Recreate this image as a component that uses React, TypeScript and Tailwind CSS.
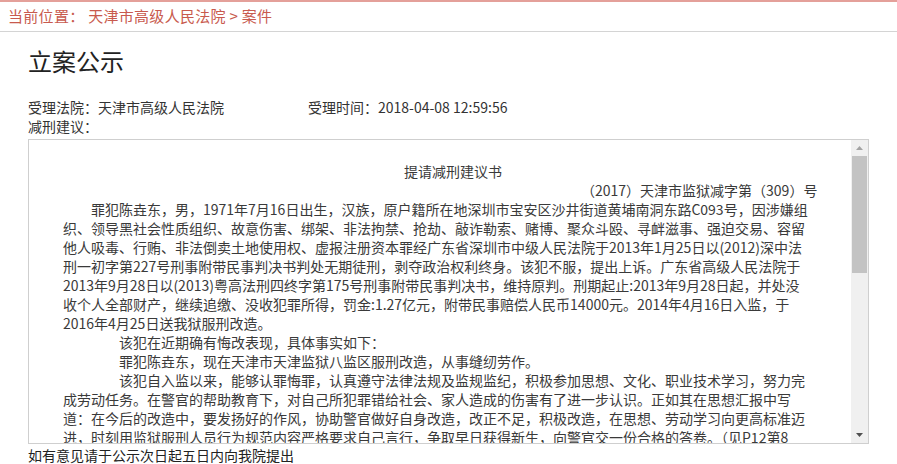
const lines: { text: string; indent?: number; pad?: number }[] = [
  { text: "提请减刑建议书", pad: 341 },
  { text: "（2017）天津市监狱减字第（309）号", pad: 518 },
  { text: "罪犯陈垚东，男，1971年7月16日出生，汉族，原户籍所在地深圳市宝安区沙井街道黄埔南洞东路C093号，因涉嫌组", indent: 2 },
  { text: "织、领导黑社会性质组织、故意伤害、绑架、非法拘禁、抢劫、敲诈勒索、赌博、聚众斗殴、寻衅滋事、强迫交易、容留" },
  { text: "他人吸毒、行贿、非法倒卖土地使用权、虚报注册资本罪经广东省深圳市中级人民法院于2013年1月25日以(2012)深中法" },
  { text: "刑一初字第227号刑事附带民事判决书判处无期徒刑，剥夺政治权利终身。该犯不服，提出上诉。广东省高级人民法院于" },
  { text: "2013年9月28日以(2013)粤高法刑四终字第175号刑事附带民事判决书，维持原判。刑期起止:2013年9月28日起，并处没" },
  { text: "收个人全部财产，继续追缴、没收犯罪所得，罚金:1.27亿元，附带民事赔偿人民币14000元。2014年4月16日入监，于" },
  { text: "2016年4月25日送我狱服刑改造。" },
  { text: "该犯在近期确有悔改表现，具体事实如下：", indent: 4 },
  { text: "罪犯陈垚东，现在天津市天津监狱八监区服刑改造，从事缝纫劳作。", indent: 4 },
  { text: "该犯自入监以来，能够认罪悔罪，认真遵守法律法规及监规监纪，积极参加思想、文化、职业技术学习，努力完", indent: 4 },
  { text: "成劳动任务。在警官的帮助教育下，对自己所犯罪错给社会、家人造成的伤害有了进一步认识。正如其在思想汇报中写" },
  { text: "道：在今后的改造中，要发扬好的作风，协助警官做好自身改造，改正不足，积极改造，在思想、劳动学习向更高标准迈" },
  { text: "进，时刻用监狱服刑人员行为规范内容严格要求自己言行，争取早日获得新生，向警官交一份合格的答卷。（见P12第8" },
]

const font = { fontFamily: '"Noto Sans CJK SC", "Noto Sans", sans-serif' }

export default function App() {
  return (
    <div className="w-[897px] h-[464px] bg-white text-[#333] overflow-hidden" style={font}>
      {/* breadcrumb */}
      <div className="h-[32px] border-t-2 border-t-[#e4a09a] border-b border-b-[#d4d4d4] px-[8px] flex items-center text-[15px] text-[#c85a4e] tracking-[0.3px]">
        当前位置： 天津市高级人民法院 &gt; 案件
      </div>

      <div className="pl-[28px]">
        <h1 className="mt-[13px] h-[32px] leading-[32px] text-[24px] text-[#222]">立案公示</h1>

        <div className="mt-[21px] flex text-[14px] leading-[19px]">
          <div className="w-[280px]">受理法院：天津市高级人民法院</div>
          <div>受理时间：2018-04-08 12:59:56</div>
        </div>
        <div className="text-[14px] leading-[19px]">减刑建议：</div>

        {/* text box */}
        <div className="mt-[3px] w-[841px] h-[305px] border border-[#cfcfcf] flex">
          <div className="flex-1 overflow-hidden pl-[34px] pt-[22px] text-[14px] leading-[19px] text-[#3a3a3a]">
            {lines.map((l, i) => (
              <div
                key={i}
                className="whitespace-nowrap"
                style={{ paddingLeft: l.pad ?? (l.indent ?? 0) * 14 }}
              >
                {l.text}
              </div>
            ))}
          </div>
          <div className="w-[17px] bg-[#f0f0f0] flex flex-col items-center">
            <div className="h-[16px] flex items-center justify-center">
              <svg width="7" height="4" viewBox="0 0 7 4"><path d="M0 4 L3.5 0 L7 4 Z" fill="#a3a3a3" /></svg>
            </div>
            <div className="w-[15px] h-[117px] bg-[#c3c3c3]" />
            <div className="flex-1" />
            <div className="h-[16px] flex items-center justify-center">
              <svg width="7" height="4" viewBox="0 0 7 4"><path d="M0 0 L7 0 L3.5 4 Z" fill="#505050" /></svg>
            </div>
          </div>
        </div>

        <div className="text-[14px] leading-[22px] text-[#222]">如有意见请于公示次日起五日内向我院提出</div>
      </div>
    </div>
  )
}
